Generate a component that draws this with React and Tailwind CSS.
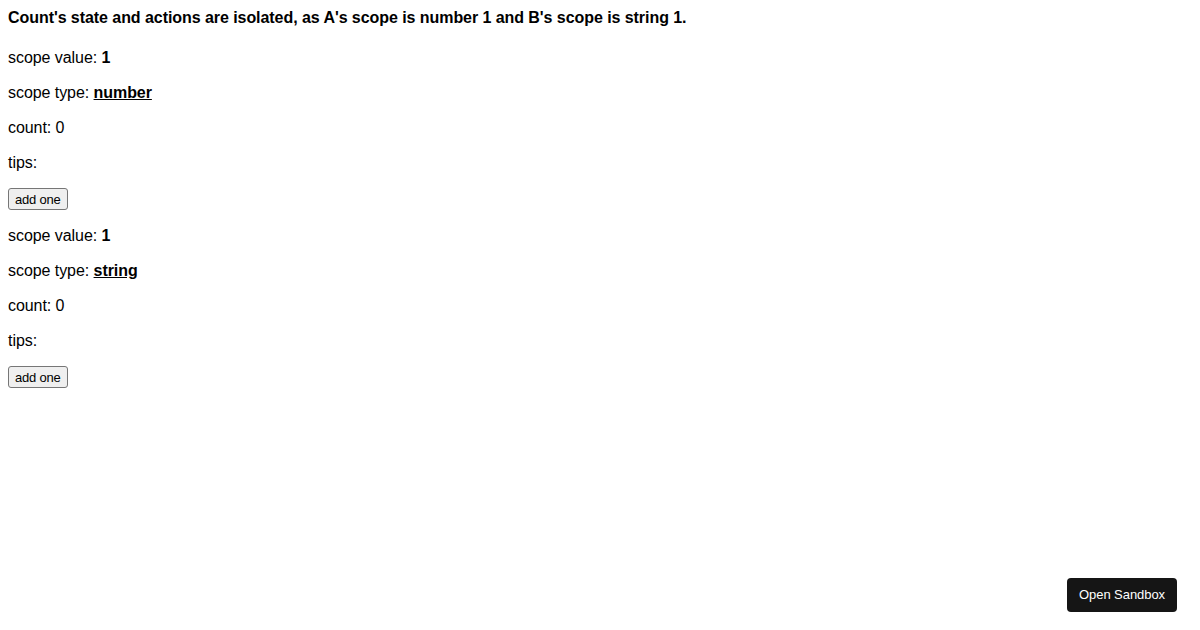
const SCOPES = [
  { value: 1, type: 'number' },
  { value: '1', type: 'string' },
];

function Counter({ scope }) {
  return (
    <div>
      <p className="my-4 leading-[19px]">
        scope value: <b>{String(scope.value)}</b>
      </p>
      <p className="my-4 leading-[19px]">
        scope type: <b className="underline">{typeof scope.value}</b>
      </p>
      <p className="my-4 leading-[19px]">count: 0</p>
      <p className="my-4 leading-[19px]">tips: </p>
      <div className="flex">
        <button className="h-[22px] px-[6px] border border-[#767676] rounded-[3px] bg-[#efefef] text-[13px] leading-[15px] tracking-[-0.2px] text-black">
          add one
        </button>
      </div>
    </div>
  );
}

export default function App() {
  return (
    <div className="min-h-[630px] bg-white p-2 text-[16px] tracking-[-0.06px] text-black font-['Liberation_Sans',Arial,sans-serif]">
      <div className="font-bold leading-[19px] mb-[21px]">
        Count's state and actions are isolated, as A's scope is number 1 and B's scope is string 1.
      </div>
      {SCOPES.map((s, i) => (
        <Counter key={i} scope={s} />
      ))}
      <button className="fixed right-[23px] bottom-[18px] h-[34px] px-[12px] rounded-[4px] bg-[#151515] text-white text-[13px]">
        Open Sandbox
      </button>
    </div>
  );
}
